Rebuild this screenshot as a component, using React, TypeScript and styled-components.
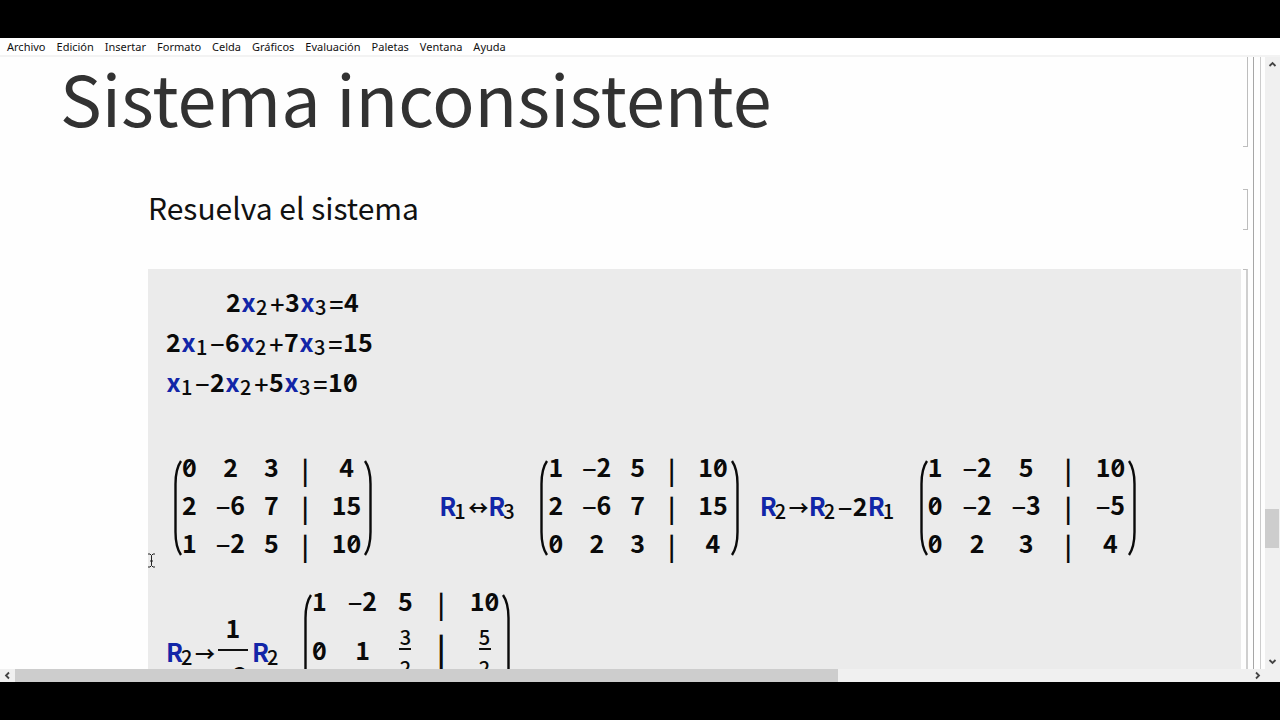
import React from "react";
import styled, { createGlobalStyle } from "styled-components";

const GlobalStyle = createGlobalStyle`
  * { box-sizing: border-box; }
  body { margin: 0; background: #000; }
`;

const Screen = styled.div`
  height: 100vh;
  padding: 38px 0;
  display: flex;
  flex-direction: column;
  background: #000;
  overflow: hidden;
  font-family: "Noto Sans CJK SC", sans-serif;
`;

const MenuBar = styled.nav`
  display: flex;
  gap: 11px;
  height: 19px;
  padding: 0 7px;
  background: #fff;
  border-bottom: 2px solid #f3f3f3;
`;

const MenuItem = styled.button`
  border: 0;
  padding: 0;
  background: none;
  color: #111;
  font: 11px/18px "Noto Sans", sans-serif;
`;

const Workspace = styled.div`
  flex: 1;
  min-height: 0;
  display: flex;
  background: #fefefe;
`;

const Notebook = styled.main`
  flex: 1;
  min-width: 0;
  overflow: hidden;
`;

const Cell = styled.section<{ $gap?: number }>`
  display: flex;
  justify-content: space-between;
  margin-bottom: ${(p) => p.$gap ?? 0}px;
`;

const Bracket = styled.div<{ $open?: boolean; $thick?: boolean }>`
  flex: none;
  width: 5px;
  border: 1px solid #bdbdbd;
  border-left: 0;
  ${(p) => p.$open && "border-top: 0;"}
  ${(p) => p.$thick && "border-right: 2px solid #cfcfcf;"}
`;

const Title = styled.h1`
  margin: 0;
  height: 90px;
  padding-left: 60px;
  font-size: 70px;
  font-weight: 400;
  line-height: 80px;
  color: #323232;
  white-space: nowrap;
`;

const Paragraph = styled.p`
  margin: 0;
  height: 41px;
  padding-left: 148px;
  font-size: 30px;
  line-height: 36px;
  color: #111;
`;

const InputCell = styled.div`
  flex: 1;
  min-width: 0;
  height: 440px;
  margin: 0 2px 0 148px;
  padding-top: 12px;
  background: #ebebeb;
  color: #0a0a0a;
  font-size: 25px;
  font-weight: 700;
  white-space: nowrap;
`;

const Equations = styled.div`
  padding-left: 18px;
  margin-bottom: 46px;
`;

const Equation = styled.div<{ $indent?: boolean }>`
  display: flex;
  align-items: center;
  height: 40px;
  line-height: 40px;
  padding-left: ${(p) => (p.$indent ? 60 : 0)}px;
`;

const Digit = styled.span`
  width: 15px;
  text-align: center;
`;

const Name = styled(Digit)`
  color: #1226a8;
`;

const Op = styled(Digit)`
  padding-top: 4px;
  font-weight: 500;
`;

const ArrowOp = styled(Op)`
  width: 20px;
  padding-top: 6px;
  font-size: 20px;
  font-weight: 700;
`;

const Sub = styled.sub`
  width: 14px;
  padding-top: 12px;
  font-size: 20px;
  font-weight: 500;
  vertical-align: baseline;
`;

/* A zero carries a diagonal stroke through its counter. */
const Zero = styled.span`
  position: relative;
  display: inline-block;
  line-height: 38px;
  &::after {
    content: "";
    position: absolute;
    left: calc(50% - 1px);
    top: calc(50% - 5px);
    width: 2px;
    height: 10px;
    background: #0a0a0a;
    transform: rotate(38deg);
  }
`;

const Minus = styled.span`
  font-weight: 500;
  line-height: 0;
  vertical-align: -2px;
`;

const Steps = styled.div<{ $start: number; $top?: number }>`
  display: flex;
  align-items: flex-start;
  padding-left: ${(p) => p.$start}px;
  margin-top: ${(p) => p.$top ?? 0}px;
`;

const Operation = styled.div<{ $before?: number; $top: number }>`
  display: flex;
  align-items: center;
  height: 40px;
  line-height: 40px;
  margin: ${(p) => p.$top}px 22px 0 ${(p) => p.$before ?? 0}px;
`;

const Fraction = styled.span`
  display: flex;
  flex-direction: column;
  width: 30px;
  margin: 0 4px 0 3px;
  line-height: 44px;
  text-align: center;
`;

const Denominator = styled.span`
  padding-top: 2px;
  border-top: 2px solid #111;
`;

const SmallFraction = styled.span`
  display: flex;
  flex-direction: column;
  width: 12px;
  margin: 0 auto;
  padding-top: 7px;
  font-size: 20px;
  font-weight: 500;
  line-height: 22px;
`;

const SmallDenominator = styled.span`
  padding-top: 7px;
  border-top: 2px solid #111;
`;

const MatrixBox = styled.div`
  display: flex;
  align-items: stretch;
`;

const Paren = styled.svg`
  width: 9px;
  height: auto;
  margin: 13px 0 5px;
`;

const Grid = styled.table`
  margin-right: 3px;
  border-collapse: collapse;
`;

const Entry = styled.td<{ $tall?: boolean; $gap: number }>`
  height: ${(p) => (p.$tall ? 60 : 38)}px;
  min-width: 15px;
  padding: 0 0 0 ${(p) => p.$gap}px;
  line-height: 38px;
  text-align: center;
  &:first-child { padding-left: 0; }
`;

const Rule = styled.span<{ $tall?: boolean }>`
  display: block;
  width: 15px;
  height: ${(p) => (p.$tall ? 60 : 38)}px;
  font-size: ${(p) => (p.$tall ? 46 : 25)}px;
  font-weight: ${(p) => (p.$tall ? 400 : 700)};
  line-height: ${(p) => (p.$tall ? 68 : 44)}px;
`;

const Rail = styled.div<{ $width: number; $tone: string }>`
  flex: none;
  width: ${(p) => p.$width}px;
  border-right: 1px solid ${(p) => p.$tone};
`;

const VerticalBar = styled.div`
  flex: none;
  display: flex;
  flex-direction: column;
  align-items: center;
  justify-content: space-between;
  width: 15px;
  margin-left: 4px;
  background: #f0f0f0;
`;

const HorizontalBar = styled.div`
  display: flex;
  align-items: center;
  height: 13px;
  padding-right: 15px;
  background: #f0f0f0;
`;

const Arrow = styled.button`
  flex: none;
  display: grid;
  place-items: center;
  width: 15px;
  height: 15px;
  padding: 0;
  border: 0;
  background: none;
`;

const VTrack = styled.div`
  flex: 1;
  width: 100%;
  display: grid;
  grid-template-rows: 437fr 39fr 106fr;
`;

const VThumb = styled.div`
  grid-row: 2;
  margin-right: 1px;
  background: #cdcdcd;
`;

const HTrack = styled.div`
  flex: 1;
  height: 100%;
  display: grid;
  grid-template-columns: 823fr 412fr;
`;

const HThumb = styled.div`
  background: #cdcdcd;
`;

const Pointer = styled.svg`
  position: absolute;
  left: 147px;
  top: 553px;
  width: 9px;
  height: 15px;
`;

const Chevron = ({ turn }: { turn: number }) => (
  <svg width="9" height="9" viewBox="0 0 9 9" aria-hidden="true">
    <path
      d="M1.500 6 4.500 3 7.500 6"
      fill="none"
      stroke="#444"
      strokeWidth="1.8"
      transform={`rotate(${turn} 4.5 4.5)`}
    />
  </svg>
);

const Digits = ({ text }: { text: string }) => (
  <>
    {[...text].map((c, i) => {
      if (c === "0") return <Zero key={i}>0</Zero>;
      if (c === "−") return <Minus key={i}>−</Minus>;
      return c;
    })}
  </>
);

/* Renders an expression such as "2x_2+3x_3=4"; "_n" marks a subscript. */
const Formula = ({ text }: { text: string }) => (
  <>
    {(text.match(/_\d|./g) ?? []).map((t, i) => {
      if (t[0] === "_") return <Sub key={i}>{t[1]}</Sub>;
      if (/[a-zA-Z]/.test(t)) return <Name key={i}>{t}</Name>;
      if (/\d/.test(t)) return <Digit key={i}><Digits text={t} /></Digit>;
      if (t === "↔" || t === "→") return <ArrowOp key={i}>{t}</ArrowOp>;
      return <Op key={i}>{t}</Op>;
    })}
  </>
);

const Value = ({ text, tall }: { text: string; tall?: boolean }) => {
  if (text === "|") return <Rule $tall={tall}>|</Rule>;
  if (text.includes("/")) {
    const [top, bottom] = text.split("/");
    return (
      <SmallFraction>
        <span>{top}</span>
        <SmallDenominator>{bottom}</SmallDenominator>
      </SmallFraction>
    );
  }
  return <Digits text={text} />;
};

const Matrix = ({ rows, gap = 19 }: { rows: string[]; gap?: number }) => {
  const tall = rows.some((r) => r.includes("/"));
  const h = tall ? 140 : 96;
  return (
    <MatrixBox>
      <Paren viewBox={`0 0 9 ${h}`} preserveAspectRatio="none" aria-hidden="true">
        <path d={`M8 1Q2.500 9 2.500 24V${h - 24}Q2.500 ${h - 9} 8 ${h - 1}`} fill="none" stroke="#0a0a0a" strokeWidth="2.4" />
      </Paren>
      <Grid>
        <tbody>
          {rows.map((r, i) => (
            <tr key={i}>
              {r.split(" ").map((v, j) => (
                <Entry key={j} $tall={tall && i > 0} $gap={gap}>
                  <Value text={v} tall={tall && i > 0} />
                </Entry>
              ))}
            </tr>
          ))}
        </tbody>
      </Grid>
      <Paren viewBox={`0 0 9 ${h}`} preserveAspectRatio="none" aria-hidden="true">
        <path d={`M1 1Q6.500 9 6.500 24V${h - 24}Q6.500 ${h - 9} 1 ${h - 1}`} fill="none" stroke="#0a0a0a" strokeWidth="2.4" />
      </Paren>
    </MatrixBox>
  );
};

const menus = ["Archivo", "Edición", "Insertar", "Formato", "Celda", "Gráficos", "Evaluación", "Paletas", "Ventana", "Ayuda"];

export default function App() {
  return (
    <Screen>
      <GlobalStyle />
      <MenuBar>
        {menus.map((m) => (
          <MenuItem key={m}>{m}</MenuItem>
        ))}
      </MenuBar>
      <Workspace>
        <Notebook>
          <Cell $gap={42}>
            <Title>Sistema inconsistente</Title>
            <Bracket $open />
          </Cell>
          <Cell $gap={39}>
            <Paragraph>Resuelva el sistema</Paragraph>
            <Bracket />
          </Cell>
          <Cell>
            <InputCell>
              <Equations>
                <Equation $indent><Formula text="2x_2+3x_3=4" /></Equation>
                <Equation><Formula text="2x_1−6x_2+7x_3=15" /></Equation>
                <Equation><Formula text="x_1−2x_2+5x_3=10" /></Equation>
              </Equations>
              <Steps $start={25}>
                <Matrix rows={["0 2 3 | 4", "2 −6 7 | 15", "1 −2 5 | 10"]} />
                <Operation $before={66} $top={38}><Formula text="R_1↔R_3" /></Operation>
                <Matrix rows={["1 −2 5 | 10", "2 −6 7 | 15", "0 2 3 | 4"]} />
                <Operation $before={20} $top={38}><Formula text="R_2→R_2−2R_1" /></Operation>
                <Matrix gap={20} rows={["1 −2 5 | 10", "0 −2 −3 | −5", "0 2 3 | 4"]} />
              </Steps>
              <Steps $start={18} $top={20}>
                <Operation $top={50}>
                  <Formula text="R_2→" />
                  <Fraction>
                    <span>1</span>
                    <Denominator>−2</Denominator>
                  </Fraction>
                  <Formula text="R_2" />
                </Operation>
                <Matrix gap={21} rows={["1 −2 5 | 10", "0 1 3/2 | 5/2", "0 2 3 | 4"]} />
              </Steps>
            </InputCell>
            <Bracket $thick />
          </Cell>
        </Notebook>
        <Rail $width={6} $tone="#a6a6a6" />
        <Rail $width={7} $tone="#cccccc" />
        <VerticalBar>
          <Arrow aria-label="Subir"><Chevron turn={0} /></Arrow>
          <VTrack><VThumb /></VTrack>
          <Arrow aria-label="Bajar"><Chevron turn={180} /></Arrow>
        </VerticalBar>
      </Workspace>
      <HorizontalBar>
        <Arrow aria-label="Izquierda"><Chevron turn={-90} /></Arrow>
        <HTrack><HThumb /></HTrack>
        <Arrow aria-label="Derecha"><Chevron turn={90} /></Arrow>
      </HorizontalBar>
      <Pointer viewBox="0 0 9 15" aria-hidden="true">
        <path d="M1 1H3L4.500 2.500 6 1H8M4.500 2.500V12.500M1 14H3L4.500 12.500 6 14H8M3 8H6" fill="none" stroke="#222" />
      </Pointer>
    </Screen>
  );
}
